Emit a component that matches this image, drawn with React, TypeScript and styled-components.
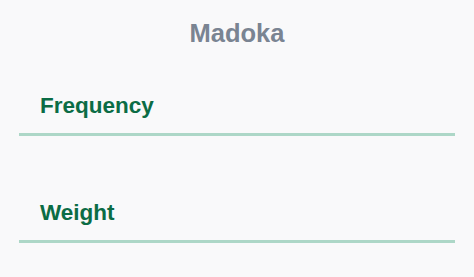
import { createGlobalStyle, styled } from "styled-components";

const GlobalStyle = createGlobalStyle`
    html, body {
        margin: 0;
        padding: 0;
        background: #f9f9fa;
    }
    body {
        font-family: "Liberation Sans", Arial, sans-serif;
    }
`;

export const Page = styled.div`
    display: flex;
    flex-direction: column;
    min-height: 100vh;
    padding: 19px 19px 0;
    box-sizing: border-box;
`;

export const Title = styled.h1`
    margin: 0;
    font-size: 25.5px;
    line-height: 29px;
    font-weight: 700;
    color: #7a8492;
    text-align: center;
`;

export const Form = styled.div`
    display: flex;
    flex-direction: column;
    gap: 64px;
    padding-top: 45px;
`;

export const Field = styled.div`
    display: flex;
    flex-direction: column;
    border-bottom: 3px solid #add7c7;
`;

export const Label = styled.label`
    font-size: 22.5px;
    line-height: 26px;
    font-weight: 700;
    color: #0b6c45;
    padding-left: 21px;
    margin-bottom: 14px;
`;

const fields = ["Frequency", "Weight"];

export default function App() {
    return (
        <>
            <GlobalStyle />
            <Page>
                <Title>Madoka</Title>
                <Form>
                    {fields.map((name) => (
                        <Field key={name}>
                            <Label>{name}</Label>
                        </Field>
                    ))}
                </Form>
            </Page>
        </>
    );
}
